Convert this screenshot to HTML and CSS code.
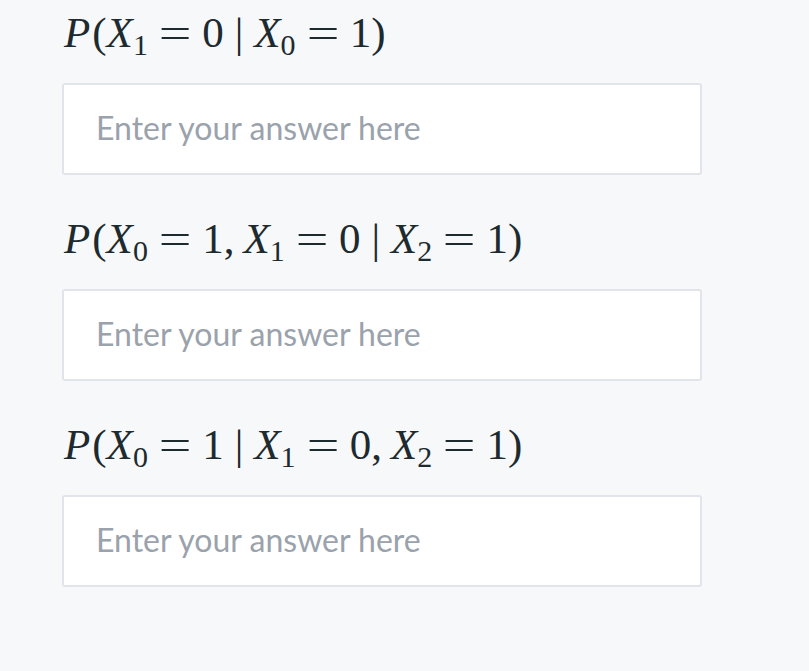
FILE: index.html
```html
<!DOCTYPE html>
<html>
<head>
<meta charset="utf-8">
<link rel="stylesheet" href="styles.css">
</head>
<body>
<div class="page">
  <div class="question">
    <div class="math"><i>P</i>(<i>X</i><sub>1</sub><span class="rel">=</span>0<span class="bar">|</span><i>X</i><sub>0</sub><span class="rel">=</span>1)</div>
    <div class="answer"><input type="text" placeholder="Enter your answer here"></div>
  </div>
  <div class="question">
    <div class="math"><i>P</i>(<i>X</i><sub>0</sub><span class="rel">=</span>1,<span class="sp"></span><i>X</i><sub>1</sub><span class="rel">=</span>0<span class="bar">|</span><i>X</i><sub>2</sub><span class="rel">=</span>1)</div>
    <div class="answer"><input type="text" placeholder="Enter your answer here"></div>
  </div>
  <div class="question">
    <div class="math"><i>P</i>(<i>X</i><sub>0</sub><span class="rel">=</span>1<span class="bar">|</span><i>X</i><sub>1</sub><span class="rel">=</span>0,<span class="sp"></span><i>X</i><sub>2</sub><span class="rel">=</span>1)</div>
    <div class="answer"><input type="text" placeholder="Enter your answer here"></div>
  </div>
</div>
</body>
</html>
```
FILE: styles.css
```css
html, body {
  margin: 0;
  padding: 0;
  background: #f7f8fa;
}
.page {
  padding: 2px 0 0 62px;
  width: 640px;
  display: flex;
  flex-direction: column;
  gap: 33px;
}
.question {
  display: flex;
  flex-direction: column;
  gap: 19px;
}
.math {
  font-family: "Liberation Serif", "DejaVu Serif", serif;
  font-size: 43px;
  line-height: 62px;
  height: 62px;
  color: #1d2a2e;
  padding-left: 2px;
  white-space: nowrap;
}
.math i {
  font-style: italic;
  margin-right: 2px;
}
.math sub {
  font-size: 30px;
  vertical-align: baseline;
  position: relative;
  top: 8px;
  margin-left: -2px;
}
.rel {
  display: inline-block;
  margin: 0 15px;
  transform: scaleX(1.35);
}
.bar {
  margin: 0 11px;
}
.sp {
  display: inline-block;
  width: 9px;
}
.answer input {
  box-sizing: border-box;
  width: 640px;
  height: 92px;
  border: 2px solid #e1e4ea;
  border-radius: 3px;
  background: #ffffff;
  padding: 0 0 4px 32px;
  font-family: "Lato", "Open Sans", sans-serif;
  font-size: 32px;
  color: #333;
  outline: none;
  display: block;
}
.answer input::placeholder {
  color: #9aa2ac;
}
```
